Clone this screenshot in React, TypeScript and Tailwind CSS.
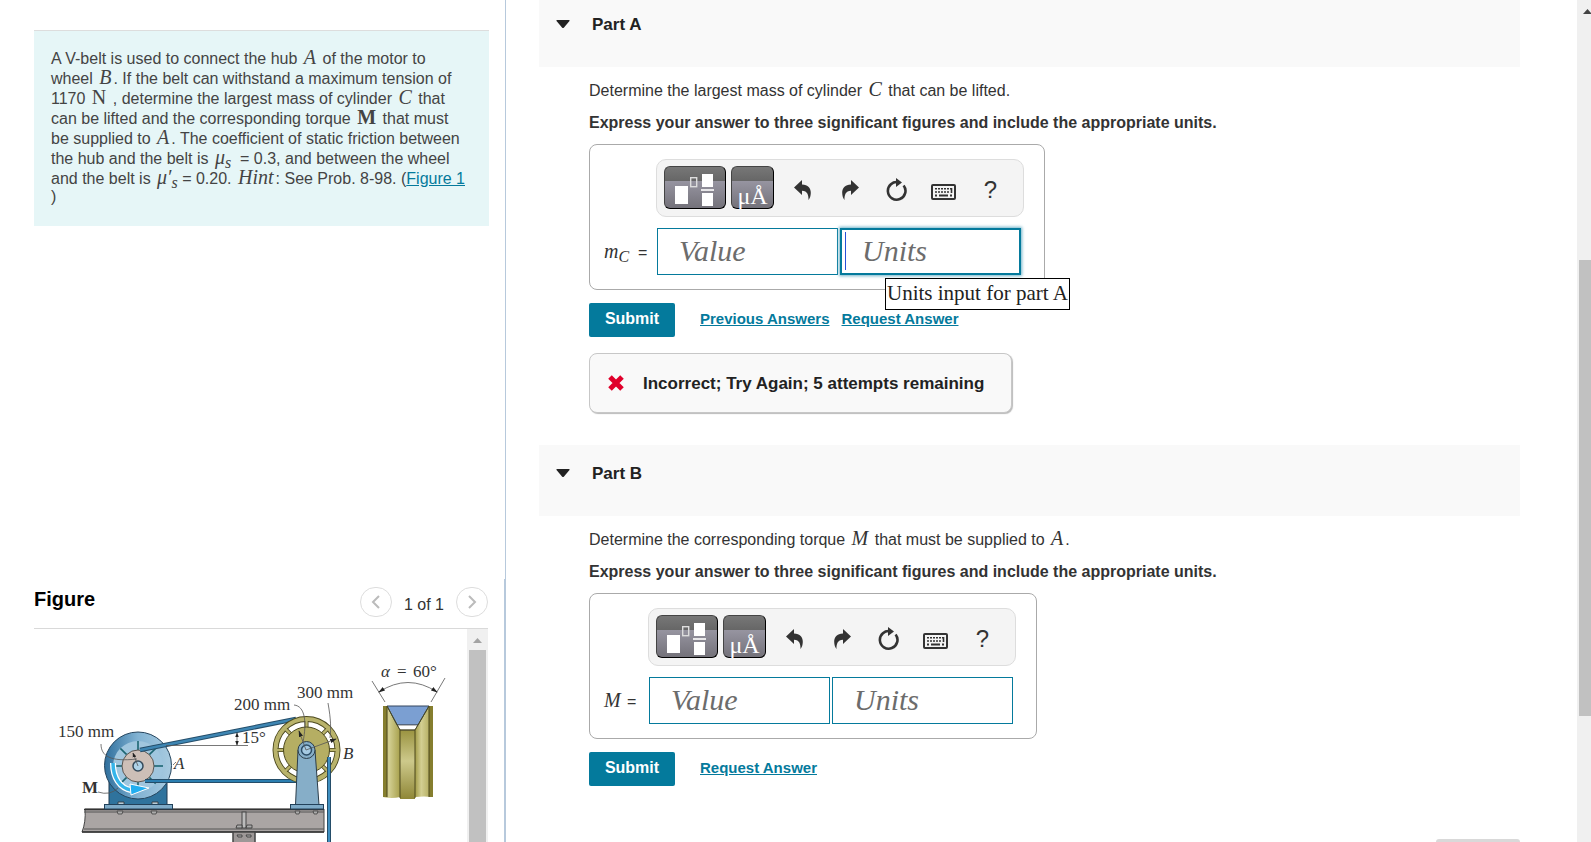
import type { ReactNode } from "react";

function Var({ children, bold, upright }: { children: ReactNode; bold?: boolean; upright?: boolean }) {
    const style = upright || bold ? "not-italic" : "italic";
    return (
        <span className={`px-0.5 font-['Liberation_Serif',serif] text-xl leading-none ${style} ${bold ? "font-bold" : ""}`}>
            {children}
        </span>
    );
}

function Sub({ children }: { children: ReactNode }) {
    return <sub className="-ml-0.5 font-['Liberation_Serif',serif] text-base leading-none italic">{children}</sub>;
}

function UndoIcon({ flip }: { flip?: boolean }) {
    return (
        <svg width="17" height="20" viewBox="0 0 17 20" className={flip ? "-scale-x-100" : ""} aria-hidden="true">
            <path d="M0 7.5 L8 0 V4.5 C14 4.5 17 8.5 16.8 13 C16.7 16 16 18 14.5 20 C14.6 15 13.5 11 8 10.8 V15 Z" fill="#333" />
        </svg>
    );
}

function ResetIcon() {
    return (
        <svg width="22" height="24" viewBox="0 0 22 24" aria-hidden="true">
            <path d="M12 4.2 A8.8 8.8 0 1 0 17.2 7" fill="none" stroke="#333" strokeWidth="2.6" transform="rotate(4 11 13)" />
            <path d="M10 0 L16 4.5 L10 9 Z" fill="#333" />
        </svg>
    );
}

function KeyboardIcon() {
    return (
        <svg width="25" height="16" viewBox="0 0 25 16" aria-hidden="true">
            <rect x="1" y="1" width="23" height="14" rx="1" fill="none" stroke="#333" strokeWidth="2" />
            <path d="M4 4.8 H20" stroke="#333" strokeWidth="1.6" strokeDasharray="2 1" />
            <path d="M4 8 H19" stroke="#333" strokeWidth="1.6" strokeDasharray="2 1" />
            <path d="M20.5 4 v5" stroke="#333" strokeWidth="1.6" />
            <path d="M4 11.5 h2 M8 11.5 h9 M19 11.5 h2" stroke="#333" strokeWidth="1.8" />
        </svg>
    );
}

function TemplatesIcon() {
    return (
        <svg width="40" height="34" viewBox="0 0 40 34" aria-hidden="true">
            <rect x="0" y="12" width="13" height="18" fill="#fff" />
            <rect x="15.700" y="3.700" width="6" height="9" fill="none" stroke="#ddd" strokeWidth="1.4" />
            <rect x="27" y="0" width="11" height="13" fill="#fff" />
            <path d="M26 16 H39" stroke="#fff" strokeWidth="1.6" />
            <rect x="27" y="19" width="11" height="13" fill="#fff" />
        </svg>
    );
}

const darkButton =
    "h-[43px] rounded-md border border-[#444] border-r-black border-b-black bg-[linear-gradient(#777,#666_35%,#9694a0_35%,#74727a)] flex justify-center";
const toolButton = "h-11 w-[47px] flex items-center justify-center text-[#333]";

function Toolbar() {
    return (
        <div className="flex h-[58px] w-[368px] items-center rounded-[10px] border border-[#ddd] bg-[#f4f4f4] px-[7px] pb-0.5">
            <button className={`${darkButton} w-[62px] items-end`} aria-label="Templates">
                <TemplatesIcon />
            </button>
            <button
                className={`${darkButton} ml-[5px] w-[43px] items-end font-['Liberation_Serif',serif] text-2xl leading-6 text-white`}
                aria-label="Symbols"
            >
                μÅ
            </button>
            <div className="ml-[5px] flex items-center pt-1.5">
                <button className={toolButton} aria-label="Undo"><UndoIcon /></button>
                <button className={`${toolButton} pl-0.5`} aria-label="Redo"><UndoIcon flip /></button>
                <button className={toolButton} aria-label="Reset"><ResetIcon /></button>
                <button className={`${toolButton} pt-1`} aria-label="Keyboard shortcuts"><KeyboardIcon /></button>
                <button className={`${toolButton} text-2xl`} aria-label="Help">?</button>
            </div>
        </div>
    );
}

type AnswerProps = { part: string; label: ReactNode; focused?: boolean; labelWidth: string };

const field =
    "block h-[47px] w-[181px] border border-[#047a9c] bg-white pb-0.5 pl-[21px] font-['Liberation_Serif',serif] text-[30px] italic text-[#333] placeholder:text-[#6c6c6c] outline-none";

function AnswerBox({ part, label, focused, labelWidth }: AnswerProps) {
    return (
        <div className="relative flex w-fit items-end rounded-lg border border-[#aaa] pt-3.5 pr-5 pb-3.5">
            <label htmlFor={`value-${part}`} className={`${labelWidth} flex h-[47px] items-center pt-0.5 pl-3 text-base text-[#333]`}>
                {label}
            </label>
            <div>
                <Toolbar />
                <div className="mt-[11px] ml-px flex gap-0.5">
                    <input id={`value-${part}`} className={field} placeholder="Value" />
                    <div className="relative">
                        <input
                            aria-label={`Units input for part ${part}`}
                            className={`${field} ${focused ? "shadow-[inset_0_0_0_1px_#047a9c,0_0_3px_1px_#6fb3c8]" : ""}`}
                            placeholder="Units"
                        />
                        {focused && (
                            <>
                                <span className="absolute top-1 left-[5px] h-[38px] w-px bg-[#2850d8]" />
                                <span
                                    role="tooltip"
                                    className="absolute top-[50px] left-[45px] z-10 border border-black bg-white px-px pb-0.5 font-['Liberation_Serif',serif] text-[21px] leading-7 whitespace-nowrap text-[#222]"
                                >
                                    Units input for part {part}
                                </span>
                            </>
                        )}
                    </div>
                </div>
            </div>
        </div>
    );
}

function PartHeader({ title }: { title: string }) {
    return (
        <header className="h-[71px] bg-[#f9f9f9] px-[17px] pt-3.5">
            <button className="flex h-7 items-center gap-[22px] text-[17px] font-bold text-[#222]">
                <svg width="14" height="8" viewBox="0 0 14 8" aria-hidden="true">
                    <path d="M1 0 H13 Q14 0 13.5 1 L8 7.4 Q7 8.4 6 7.4 L0.5 1 Q0 0 1 0 Z" fill="#222" />
                </svg>
                <span className="pt-0.5">{title}</span>
            </button>
        </header>
    );
}

type PartProps = AnswerProps & { question: ReactNode; links: string[]; feedback?: string };

function Part({ part, question, links, feedback, ...answer }: PartProps) {
    return (
        <section>
            <PartHeader title={`Part ${part}`} />
            <div className="pt-3 pl-[50px] text-base text-[#333]">
                <p className="h-6 leading-6">{question}</p>
                <p className="mt-2 leading-6 font-bold">
                    Express your answer to three significant figures and include the appropriate units.
                </p>
                <div className="pt-[9px]">
                    <AnswerBox part={part} {...answer} />
                </div>
                <div className="mt-[13px] flex items-center">
                    <button className="h-[34px] w-[86px] rounded-xs bg-[#047a9c] pb-0.5 text-base font-bold text-white">Submit</button>
                    <div className="ml-[25px] flex gap-3 pb-0.5 text-[15px] font-bold text-[#047a9c]">
                        {links.map((text) => (
                            <a key={text} href="#" className="underline">{text}</a>
                        ))}
                    </div>
                </div>
                {feedback && (
                    <div className="mt-4 flex h-[60px] w-fit items-center gap-[18px] rounded-lg border border-[#c7c7c7] bg-[#f9f9f9] pr-[27px] pl-[17px] shadow-[1px_1px_1px_#bbb]">
                        <svg width="18" height="18" viewBox="0 0 18 18" aria-hidden="true">
                            <path d="M3 3 L15 15 M15 3 L3 15" stroke="#e0002b" strokeWidth="5" />
                        </svg>
                        <span className="pt-0.5 text-[17px] font-bold text-[#222]">{feedback}</span>
                    </div>
                )}
            </div>
        </section>
    );
}

const spokes = [0, 45, 90, 135, 180, 225, 270, 315];

function BeltFigure() {
    return (
        <svg width="433" height="213" viewBox="34 629 433 213" role="img" aria-label="Motor hub A driving wheel B with a V-belt">
            <defs>
                <linearGradient id="motor" x1="0" y1="0" x2="1" y2="0">
                    <stop offset="0" stopColor="#2f6f9d" />
                    <stop offset="0.5" stopColor="#82b3d3" />
                    <stop offset="1" stopColor="#a9cbe0" />
                </linearGradient>
                <linearGradient id="rim" x1="0" y1="0" x2="1" y2="0">
                    <stop offset="0" stopColor="#a39c46" />
                    <stop offset="0.35" stopColor="#d3cf93" />
                    <stop offset="1" stopColor="#a8a14d" />
                </linearGradient>
                <linearGradient id="groove" x1="0" y1="0" x2="0" y2="1">
                    <stop offset="0" stopColor="#9a9340" />
                    <stop offset="0.45" stopColor="#cdc98b" />
                    <stop offset="1" stopColor="#8f8737" />
                </linearGradient>
                <marker id="tip" viewBox="0 0 8 6" refX="7" refY="3" markerWidth="7" markerHeight="5" markerUnits="userSpaceOnUse" orient="auto-start-reverse">
                    <path d="M0 0.5 L8 3 L0 5.5 Z" fill="#222" />
                </marker>
                <marker id="tipSmall" viewBox="0 0 8 6" refX="7" refY="3" markerWidth="5" markerHeight="5" markerUnits="userSpaceOnUse" orient="auto-start-reverse">
                    <path d="M0 0 L8 3 L0 6 Z" fill="#222" />
                </marker>
            </defs>

            {/* beam and column */}
            <path d="M85 809 H324 V832 H82 Q86 822 85 809 Z" fill="#aaa5a4" stroke="#444" />
            <path d="M84 812 H324 M84 829 H324" stroke="#555" />
            <path d="M84 809.500 H324 M82 832 H324" stroke="#333" strokeWidth="1.4" />
            <rect x="242" y="812" width="4" height="16" fill="#bbb" stroke="#444" />
            <rect x="233" y="832" width="22" height="12" fill="#9d9897" stroke="#444" strokeWidth="1.5" />
            <path d="M236 828 h6 v-3 h-5 Z M246 828 h6 v-3 h-5 Z M237 835 h5 v2 h-4 Z M246 835 h5 v2 h-4 Z" fill="#aaa" stroke="#333" strokeWidth="0.8" />
            <path d="M117 811 h6 l-1 3 h-4 Z M151 811 h6 l-1 3 h-4 Z M295 811 h5 l-1 3 h-3 Z M313 811 h5 l-1 3 h-3 Z" fill="#aaa" stroke="#444" strokeWidth="0.8" />

            {/* motor */}
            <path d="M109 780 H167 V805 H109 Z" fill="#2f739d" stroke="#203a50" />
            <rect x="104.500" y="804.500" width="68" height="4.500" fill="#7fabc8" stroke="#22415a" />
            <path d="M118 804 v-2 h6 v2 M152 804 v-2 h6 v2" fill="#b8ccd8" stroke="#333" strokeWidth="0.8" />
            <circle cx="138" cy="765.500" r="33.500" fill="url(#motor)" stroke="#25455e" />
            <circle cx="138" cy="766" r="25" fill="#a0c6de" />
            {spokes.map((angle) => (
                <path key={angle} d="M138 750 V741" stroke="#1c6672" strokeWidth="1.6" transform={`rotate(${angle} 138 766)`} />
            ))}
            <circle cx="138" cy="766" r="16" fill="#cdbfb7" stroke="#5b5652" />
            <circle cx="138" cy="766" r="5" fill="#aed2e8" stroke="#34495a" strokeWidth="1.5" />
            <path d="M113 763 C113 778 120 788 131 790" fill="none" stroke="#fff" strokeWidth="6" />
            <path d="M113 763 C113 778 120 788 131 790" fill="none" stroke="#35b5ea" strokeWidth="3.500" />
            <path d="M130 784 L149 788 L131 795 Z" fill="#22aef0" stroke="#fff" />

            {/* belts */}
            <path d="M140 750 L296 719" stroke="#244d69" strokeWidth="4.500" />
            <path d="M140 750 L296 719" stroke="#3e86b3" strokeWidth="2.500" />
            <path d="M145 781 H298" stroke="#244d69" strokeWidth="4" />
            <path d="M145 781 H298" stroke="#2b7eb0" strokeWidth="2" />

            {/* wheel */}
            <circle cx="306.500" cy="750" r="31" fill="none" stroke="#4c491f" strokeWidth="6" />
            <circle cx="306.500" cy="750" r="31" fill="none" stroke="#b9b36b" strokeWidth="4.200" />
            {spokes.map((angle) => (
                <g key={angle} transform={`rotate(${angle} 306.5 750)`}>
                    <path d="M306.500 728 V721" stroke="#4c491f" strokeWidth="4" />
                    <path d="M306.500 728 V720" stroke="#b9b36b" strokeWidth="2.400" />
                </g>
            ))}
            <circle cx="306.500" cy="750" r="23" fill="#b5ae63" stroke="#4c491f" />
            <path d="M329 757 V842" stroke="#244d69" strokeWidth="4" />
            <path d="M329 757 V842" stroke="#3f8fc0" strokeWidth="2" />
            <path d="M298 750 L295.500 805 H319 L315 750 Z" fill="#86aec8" stroke="#2b3d4a" />
            <rect x="290.500" y="804.500" width="33" height="4.500" fill="#7fabc8" stroke="#22415a" />
            <circle cx="306.500" cy="750" r="8.500" fill="#86aec8" stroke="#2b3d4a" />
            <circle cx="306.500" cy="750" r="5" fill="#a5cae2" stroke="#2b4c66" strokeWidth="1.500" />

            {/* dimension lines */}
            <g fill="none" stroke="#555" strokeWidth="0.800">
                <path d="M101 744 C101 756 110 762 137 759" />
                <path d="M98 792 Q110 796 118 788" />
                <path d="M294 705 C305 706 307 722 303 742" />
                <path d="M328 703 C331 720 331 728 330 738" />
                <path d="M166 745.500 H248" />
                <path d="M138 766 L133 753" markerEnd="url(#tipSmall)" />
                <path d="M306 750 L299 731" markerEnd="url(#tip)" />
                <path d="M306 750 L336 739" markerEnd="url(#tip)" />
                <path d="M237 733 V745" markerStart="url(#tipSmall)" markerEnd="url(#tipSmall)" />
                <path d="M173 765 Q174 764 176 762" />
                <path d="M372 681 L385 702 M445 678 L431 702" />
                <path d="M379 692 Q408 673 437 692" markerStart="url(#tip)" markerEnd="url(#tip)" />
            </g>

            {/* groove section */}
            <path d="M383 706 H387 L400 730 V797 Q392 799 383 797 Z" fill="url(#rim)" />
            <path d="M433 706 H429 L415 730 V797 Q424 796 433 797 Z" fill="url(#rim)" />
            <rect x="400" y="730" width="15" height="69" fill="url(#groove)" />
            <path d="M387 706 H429 L418 725 H397 Z" fill="#7b9fd2" stroke="#35475e" />
            <path d="M397 725 H418 L415 730 H400 Z" fill="#fff" stroke="#555" strokeWidth="0.800" />
            <path d="M383 706 H387 V797 H383 Z M429 706 H433 V797 H429 Z" fill="#857e2e" />
            <path d="M387 706 L400 730 V798 M429 706 L415 730 V798 M400 730 H415 M387 706 V797 M429 706 V797" fill="none" stroke="#4c491f" />

            <g fontFamily="'Liberation Serif', serif" fontSize="17" fill="#333">
                <text x="58" y="737">150 mm</text>
                <text x="234" y="710">200 mm</text>
                <text x="297" y="698">300 mm</text>
                <text x="242" y="743">15°</text>
                <text x="381" y="677" fontStyle="italic">α</text>
                <text x="397" y="677">=</text>
                <text x="413" y="677">60°</text>
                <text x="174" y="769" fontStyle="italic">A</text>
                <text x="343" y="759" fontStyle="italic">B</text>
                <text x="82" y="793" fontWeight="bold">M</text>
            </g>
        </svg>
    );
}

const roundButton = "flex h-[30px] w-8 items-center justify-center rounded-full border border-[#ddd]";

function FigurePanel() {
    return (
        <section className="h-[263px] shrink-0 overflow-hidden border-r border-[#b7c9dc] pl-[34px]">
            <div className="mr-4 flex h-[50px] items-start border-b border-[#d9d9d9] pt-2">
                <h2 className="text-xl leading-6 font-bold text-black">Figure</h2>
                <button className={`${roundButton} ml-auto`} aria-label="Previous figure">
                    <svg width="10" height="14" viewBox="0 0 10 14" fill="none" stroke="#bbb" strokeWidth="2" aria-hidden="true">
                        <path d="M8 1 L2 7 L8 13" />
                    </svg>
                </button>
                <span className="px-3 pt-1.5 text-base leading-6 text-[#333]">1 of 1</span>
                <button className={roundButton} aria-label="Next figure">
                    <svg width="10" height="14" viewBox="0 0 10 14" fill="none" stroke="#bbb" strokeWidth="2" aria-hidden="true">
                        <path d="M2 1 L8 7 L2 13" />
                    </svg>
                </button>
            </div>
            <div className="mr-4 flex h-[213px]">
                <div className="min-w-0 flex-1 overflow-hidden">
                    <BeltFigure />
                </div>
                <div className="flex w-[21px] flex-col items-center bg-[#f0f0f0]">
                    <svg width="9" height="5" viewBox="0 0 9 5" className="mt-[9px] mb-[7px]" aria-hidden="true">
                        <path d="M0 5 L4.500 0 L9 5 Z" fill="#a3a3a3" />
                    </svg>
                    <div className="w-[17px] flex-1 bg-[#c1c1c1]" />
                </div>
            </div>
        </section>
    );
}

const problemLines: ReactNode[] = [
    <>A V-belt is used to connect the hub <Var>A</Var> of the motor to</>,
    <>wheel <Var>B</Var>. If the belt can withstand a maximum tension of</>,
    <>1170 <Var upright>N</Var> , determine the largest mass of cylinder <Var>C</Var> that</>,
    <>can be lifted and the corresponding torque <Var bold>M</Var> that must</>,
    <>be supplied to <Var>A</Var>. The coefficient of static friction between</>,
    <>the hub and the belt is <Var>μ</Var><Sub>s</Sub>&nbsp; = 0.3, and between the wheel</>,
    <>
        and the belt is <Var>μ′</Var><Sub>s</Sub> = 0.20. <Var>Hint</Var>: See Prob. 8-98. (
        <a href="#" className="text-[#047a9c] underline">Figure 1</a>
    </>,
    <>)</>,
];

function Problem() {
    return (
        <div className="mt-[30px] mr-4 ml-[34px] border-t border-[#ddd] bg-[#e6f6f7] pt-4 pr-2 pb-[19px] pl-[17px] text-base leading-5 text-[#444]">
            {problemLines.map((line, i) => (
                <p key={i} className="h-5 whitespace-nowrap">{line}</p>
            ))}
        </div>
    );
}

export default function App() {
    return (
        <div className="flex h-screen overflow-hidden bg-white font-['Liberation_Sans',Arial,sans-serif]">
            <aside className="flex w-[506px] shrink-0 flex-col border-r border-[#b7c9dc]">
                <div className="min-h-0 flex-1 overflow-hidden">
                    <Problem />
                </div>
                <FigurePanel />
            </aside>

            <main className="flex min-w-0 flex-1 flex-col overflow-hidden pr-[57px] pl-[33px]">
                <div className="-mt-1 flex flex-col gap-8">
                    <Part
                        part="A"
                        question={<>Determine the largest mass of cylinder <Var>C</Var> that can be lifted.</>}
                        label={<span><Var>m</Var><Sub>C</Sub>&nbsp; =</span>}
                        labelWidth="w-[66px]"
                        focused
                        links={["Previous Answers", "Request Answer"]}
                        feedback="Incorrect; Try Again; 5 attempts remaining"
                    />
                    <Part
                        part="B"
                        question={<>Determine the corresponding torque <Var>M</Var> that must be supplied to <Var>A</Var>.</>}
                        label={<span><Var>M</Var>&nbsp;=</span>}
                        labelWidth="w-[58px]"
                        links={["Request Answer"]}
                    />
                </div>
                <div className="mt-auto h-[3px] w-[84px] shrink-0 self-end rounded-t-sm bg-[#d9d9d9]" />
            </main>

            <div className="flex w-3.5 shrink-0 flex-col bg-[#f0f0f0] pl-0.5">
                <svg width="12" height="5" viewBox="0 0 12 5" className="mt-[9px]" aria-hidden="true">
                    <path d="M4 5 L8.500 0 L13 5 Z" fill="#444" />
                </svg>
                <div className="mt-[246px] h-[456px] bg-[#c1c1c1]" />
            </div>
        </div>
    );
}
